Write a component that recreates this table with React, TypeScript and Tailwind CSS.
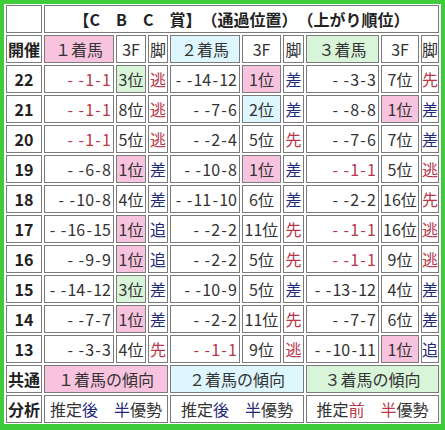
import React from "react";

type Leg = "逃" | "先" | "差" | "追";
type Place = { pos: string; f3: string; leg: Leg };
type Row = { year: string; p: [Place, Place, Place] };

const rows: Row[] = [
  { year: "22", p: [{ pos: "- -1-1", f3: "3位", leg: "逃" }, { pos: "- -14-12", f3: "1位", leg: "差" }, { pos: "- -3-3", f3: "7位", leg: "先" }] },
  { year: "21", p: [{ pos: "- -1-1", f3: "8位", leg: "逃" }, { pos: "- -7-6", f3: "2位", leg: "差" }, { pos: "- -8-8", f3: "1位", leg: "差" }] },
  { year: "20", p: [{ pos: "- -1-1", f3: "5位", leg: "逃" }, { pos: "- -2-4", f3: "5位", leg: "先" }, { pos: "- -7-6", f3: "7位", leg: "差" }] },
  { year: "19", p: [{ pos: "- -6-8", f3: "1位", leg: "差" }, { pos: "- -10-8", f3: "1位", leg: "差" }, { pos: "- -1-1", f3: "5位", leg: "逃" }] },
  { year: "18", p: [{ pos: "- -10-8", f3: "4位", leg: "差" }, { pos: "- -11-10", f3: "6位", leg: "差" }, { pos: "- -2-2", f3: "16位", leg: "先" }] },
  { year: "17", p: [{ pos: "- -16-15", f3: "1位", leg: "追" }, { pos: "- -2-2", f3: "11位", leg: "先" }, { pos: "- -1-1", f3: "16位", leg: "逃" }] },
  { year: "16", p: [{ pos: "- -9-9", f3: "1位", leg: "追" }, { pos: "- -2-2", f3: "5位", leg: "先" }, { pos: "- -1-1", f3: "9位", leg: "逃" }] },
  { year: "15", p: [{ pos: "- -14-12", f3: "3位", leg: "差" }, { pos: "- -10-9", f3: "5位", leg: "差" }, { pos: "- -13-12", f3: "4位", leg: "差" }] },
  { year: "14", p: [{ pos: "- -7-7", f3: "1位", leg: "差" }, { pos: "- -2-2", f3: "11位", leg: "先" }, { pos: "- -7-7", f3: "6位", leg: "差" }] },
  { year: "13", p: [{ pos: "- -3-3", f3: "4位", leg: "先" }, { pos: "- -1-1", f3: "9位", leg: "逃" }, { pos: "- -10-11", f3: "1位", leg: "追" }] },
];

// border only; background is set per cell
const cell = "border border-[#7a7a7a] flex items-center";
const white = `${cell} bg-white`;
const pink = "bg-[#f8c3de]";
const cyan = "bg-[#def6fd]";
const green = "bg-[#d9f5d9]";
const red = "text-[#b8364a]";
const navy = "text-[#1f2a7a]";

function f3Bg(f3: string) {
  if (f3 === "1位") return pink;
  if (f3 === "2位") return cyan;
  if (f3 === "3位") return green;
  return "bg-white";
}

// hyphens in the source font are about as wide as a digit
function Pos({ text }: { text: string }) {
  return (
    <span className="flex items-center">
      {text.split("").map((ch, i) =>
        ch === "-" ? (
          <span key={i} className="inline-block w-[8px] text-center">-</span>
        ) : ch === " " ? (
          <span key={i} className="inline-block w-[3px]" />
        ) : (
          <span key={i}>{ch}</span>
        )
      )}
    </span>
  );
}

export default function App() {
  return (
    <div
      className="w-[445px] h-[430px] bg-white border-[#3fcc3a] border-l-4 border-r-4 border-t-4 border-b-[6px] pl-[2px] pr-[2px] pt-[1px] text-[16px] leading-none text-[#333] [text-spacing-trim:space-all]"
      style={{ fontFamily: '"Noto Sans CJK JP", "Noto Sans", sans-serif' }}
    >
      <div className="grid grid-cols-[36px_70px_30px_20px_70px_39px_21px_73px_38px_18px] auto-rows-[28px] gap-[2px]">
        {/* title row */}
        <div className={white} />
        <div className={`${white} col-span-9 justify-center font-bold text-[#222]`}>
          【C　B　C　賞】（通過位置）（上がり順位）
        </div>

        {/* header row */}
        <div className={`${white} justify-center font-bold text-[#222]`}>開催</div>
        <div className={`${cell} ${pink} justify-center`}>１着馬</div>
        <div className={`${white} justify-center`}>3F</div>
        <div className={`${white} justify-center`}>脚</div>
        <div className={`${cell} ${cyan} justify-center`}>２着馬</div>
        <div className={`${white} justify-center`}>3F</div>
        <div className={`${white} justify-center`}>脚</div>
        <div className={`${cell} ${green} justify-center`}>３着馬</div>
        <div className={`${white} justify-center`}>3F</div>
        <div className={`${white} justify-center`}>脚</div>

        {rows.map((r) => (
          <React.Fragment key={r.year}>
            <div className={`${white} justify-center font-bold text-[#222]`}>{r.year}</div>
            {r.p.map((p, i) => (
              <React.Fragment key={i}>
                <div className={`${white} justify-end pr-[2px] ${p.pos === "- -1-1" ? red : ""}`}>
                  <Pos text={p.pos} />
                </div>
                <div className={`${cell} justify-center ${f3Bg(p.f3)}`}>{p.f3}</div>
                <div className={`${white} justify-center ${p.leg === "逃" || p.leg === "先" ? red : navy}`}>
                  {p.leg}
                </div>
              </React.Fragment>
            ))}
          </React.Fragment>
        ))}

        {/* 共通 row */}
        <div className={`${white} justify-center font-bold text-[#222]`}>共通</div>
        <div className={`${cell} ${pink} col-span-3 justify-center`}>１着馬の傾向</div>
        <div className={`${cell} ${cyan} col-span-3 justify-center`}>２着馬の傾向</div>
        <div className={`${cell} ${green} col-span-3 justify-center`}>３着馬の傾向</div>

        {/* 分析 row */}
        <div className={`${white} justify-center font-bold text-[#222]`}>分析</div>
        <div className={`${white} col-span-3 justify-center whitespace-pre`}>
          推定<span className={navy}>後</span>　<span className={navy}>半</span>優勢
        </div>
        <div className={`${white} col-span-3 justify-center whitespace-pre`}>
          推定<span className={navy}>後</span>　<span className={navy}>半</span>優勢
        </div>
        <div className={`${white} col-span-3 justify-center whitespace-pre`}>
          推定<span className={red}>前</span>　<span className={red}>半</span>優勢
        </div>
      </div>
    </div>
  );
}
